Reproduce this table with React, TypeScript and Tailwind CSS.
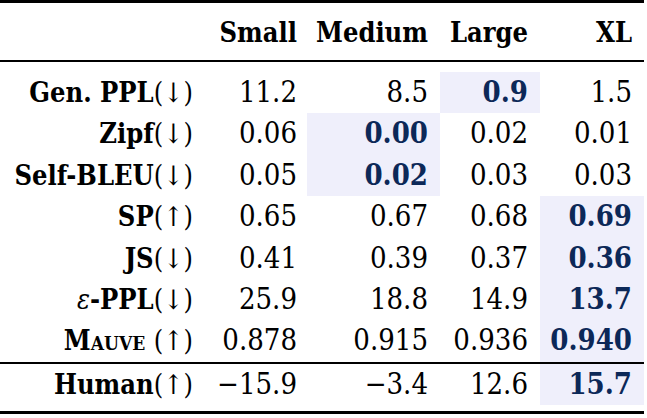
import type { ReactNode } from "react";

type Row = {
  label: ReactNode;
  cells: string[];
  best: number;
};

const arrowDown = <span className="font-normal">(↓)</span>;
const arrowUp = <span className="font-normal">(↑)</span>;

const rows: Row[] = [
  { label: <>Gen. PPL{arrowDown}</>, cells: ["11.2", "8.5", "0.9", "1.5"], best: 2 },
  { label: <>Zipf{arrowDown}</>, cells: ["0.06", "0.00", "0.02", "0.01"], best: 1 },
  { label: <>Self-BLEU{arrowDown}</>, cells: ["0.05", "0.02", "0.03", "0.03"], best: 1 },
  { label: <>SP{arrowUp}</>, cells: ["0.65", "0.67", "0.68", "0.69"], best: 3 },
  { label: <>JS{arrowDown}</>, cells: ["0.41", "0.39", "0.37", "0.36"], best: 3 },
  {
    label: (
      <>
        <span className="font-normal italic">ε</span>-PPL{arrowDown}
      </>
    ),
    cells: ["25.9", "18.8", "14.9", "13.7"],
    best: 3,
  },
  {
    label: (
      <>
        <span className="[font-variant-caps:small-caps]">Mauve</span> {arrowUp}
      </>
    ),
    cells: ["0.878", "0.915", "0.936", "0.940"],
    best: 3,
  },
];

const human: Row = {
  label: <>Human{arrowUp}</>,
  cells: ["−15.9", "−3.4", "12.6", "15.7"],
  best: 3,
};

const colClass = [
  "w-[102px] pr-[10px]",
  "w-[133px] pr-[12px]",
  "w-[100px] pr-[12px]",
  "w-[104px] pr-[12px]",
];

function DataRow({ row }: { row: Row }) {
  return (
    <div className="flex h-[41.4px] leading-[41.4px]">
      <div className="w-[205px] pr-[12px] text-right font-bold whitespace-nowrap text-[27px]">
        {row.label}
      </div>
      {row.cells.map((c, i) => (
        <div
          key={i}
          className={
            colClass[i] +
            " text-right whitespace-nowrap " +
            (i === row.best ? "bg-[#efeffb]" : "")
          }
        >
          {i === row.best ? (
            <span className="font-bold text-[#0c2858]">{c}</span>
          ) : (
            c
          )}
        </div>
      ))}
    </div>
  );
}

export default function App() {
  return (
    <div className="w-[647px] h-[418px] bg-white text-black text-[29px] font-['DejaVu_Serif_Condensed','DejaVu_Serif',serif]">
      <div className="w-[644px]">
        <div className="h-[3px] bg-black" />
        <div className="flex h-[41.4px] leading-[41.4px] mt-[9px] font-bold text-[27px]">
          <div className="w-[205px]" />
          {["Small", "Medium", "Large", "XL"].map((h, i) => (
            <div key={h} className={colClass[i] + " text-right"}>
              {h}
            </div>
          ))}
        </div>
        <div className="h-[2px] bg-black mt-[6.6px]" />
        <div className="mt-[10px]">
          {rows.map((r, i) => (
            <DataRow key={i} row={r} />
          ))}
        </div>
        <div className="h-[2px] bg-black" />
        <DataRow row={human} />
        <div className="h-[3px] bg-black mt-[6px]" />
      </div>
    </div>
  );
}
